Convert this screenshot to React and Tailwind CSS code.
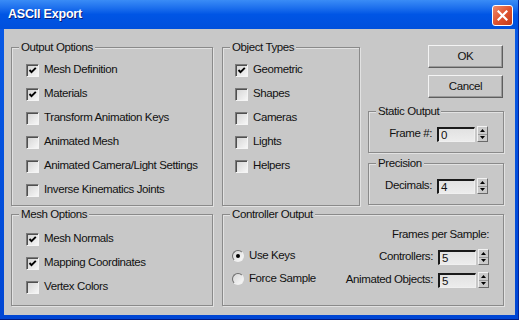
import React from 'react';

const CheckBox = ({ checked }) => (
  <div className="w-[13px] h-[13px] shrink-0 border border-t-[#7a7a7a] border-l-[#7a7a7a] border-b-[#f4f4f4] border-r-[#f4f4f4] bg-gradient-to-br from-[#d4d4d4] to-[#f6f6f6] shadow-[inset_1px_1px_0_#505050]">
    {checked && (
      <svg width="11" height="11" viewBox="0 0 11 11" className="block">
        <polyline points="2.5,5 4.5,7.2 8.8,2.8" fill="none" stroke="#000" strokeWidth="1.9" />
      </svg>
    )}
  </div>
);

const Check = ({ label, checked }) => (
  <div className="flex items-center h-[24px] gap-[5px]">
    <CheckBox checked={checked} />
    <span>{label}</span>
  </div>
);

const Radio = ({ label, checked }) => (
  <div className="flex items-center h-[16px] gap-[5px]">
    <div className="w-[12px] h-[12px] rounded-full border border-t-[#6e6e6e] border-l-[#6e6e6e] border-b-[#f0f0f0] border-r-[#f0f0f0] bg-gradient-to-br from-[#d6d6d6] to-[#fafafa] flex items-center justify-center">
      {checked && <div className="w-[4px] h-[4px] rounded-full bg-black" />}
    </div>
    <span>{label}</span>
  </div>
);

const Group = ({ title, className, children }) => (
  <div className={`relative border border-[#8a8a8a] shadow-[inset_1px_1px_0_#e2e2e2,1px_1px_0_#e2e2e2] ${className}`}>
    <span className="absolute -top-[8px] left-[7px] px-[2px] bg-[#c8c8c8] leading-[14px]">{title}</span>
    {children}
  </div>
);

const Spinner = ({ label, value }) => (
  <div className="flex items-center justify-end h-[16px]">
    <span className="mr-[5px]">{label}</span>
    <div className="w-[38px] h-[15px] border-t-2 border-l-2 border-t-[#1a1a1a] border-l-[#1a1a1a] border-b border-r border-b-[#f0f0f0] border-r-[#f0f0f0] bg-gradient-to-b from-[#e2e2e2] to-[#ececec] pl-[2px] leading-[12px]">
      {value}
    </div>
    <div className="ml-[2px] w-[11px] h-[16px] flex flex-col border border-t-[#f2f2f2] border-l-[#f2f2f2] border-b-[#6a6a6a] border-r-[#6a6a6a] bg-[#cacaca]">
      <div className="flex-1 flex items-center justify-center border-b border-[#9a9a9a]">
        <svg width="5" height="3" viewBox="0 0 5 3"><polygon points="2.5,0 5,3 0,3" fill="#000" /></svg>
      </div>
      <div className="flex-1 flex items-center justify-center">
        <svg width="5" height="3" viewBox="0 0 5 3"><polygon points="0,0 5,0 2.5,3" fill="#000" /></svg>
      </div>
    </div>
  </div>
);

const Button = ({ children, className }) => (
  <div className={`w-[75px] h-[23px] ml-[60px] flex items-center justify-center border border-t-[#f4f4f4] border-l-[#f4f4f4] border-b-[#5e5e5e] border-r-[#5e5e5e] shadow-[inset_-1px_-1px_0_#9a9a9a] ${className}`}>
    {children}
  </div>
);

export default function App() {
  return (
    <div className="w-[519px] h-[320px] flex flex-col bg-gradient-to-b from-[#0a5be6] to-[#0046d4] border-r border-r-[#00249a] border-b border-b-[#001a80] font-['Liberation_Sans',Arial,sans-serif] text-[11.5px] tracking-[-0.4px] text-[#111]">
      {/* title bar */}
      <div className="h-[29px] shrink-0 flex items-center justify-between pl-[8px] bg-gradient-to-b from-[#3a8cf6] via-[#0055e5] to-[#0050dc]">
        <span className="text-white font-bold text-[12.5px] tracking-[-0.2px] [text-shadow:1px_1px_0_#0a1e7a]">ASCII Export</span>
        <div className="mr-[5px] mt-[1px] w-[21px] h-[21px] rounded-[3px] border border-white bg-gradient-to-br from-[#ee8a6a] via-[#e0532f] to-[#c23a18] flex items-center justify-center">
          <svg width="11" height="11" viewBox="0 0 11 11">
            <path d="M1.5 1.5 L9.5 9.5 M9.5 1.5 L1.5 9.5" stroke="#fff" strokeWidth="2.2" strokeLinecap="square" />
          </svg>
        </div>
      </div>

      {/* dialog body */}
      <div className="flex-1 ml-[4px] mr-[3px] mb-[4px] bg-[#c8c8c8] pl-[7px] pt-[16px]">
        <div className="flex items-start">
          <Group title="Output Options" className="mt-[2px] w-[202px] h-[159px] pl-[14px] pt-[10px]">
            <Check label="Mesh Definition" checked />
            <Check label="Materials" checked />
            <Check label="Transform Animation Keys" />
            <Check label="Animated Mesh" />
            <Check label="Animated Camera/Light Settings" />
            <Check label="Inverse Kinematics Joints" />
          </Group>

          <Group title="Object Types" className="mt-[2px] ml-[9px] w-[138px] h-[159px] pl-[12px] pt-[10px]">
            <Check label="Geometric" checked />
            <Check label="Shapes" />
            <Check label="Cameras" />
            <Check label="Lights" />
            <Check label="Helpers" />
          </Group>

          <div className="ml-[8px] w-[136px] flex flex-col">
            <Button>OK</Button>
            <Button className="mt-[7px]">Cancel</Button>
            <Group title="Static Output" className="mt-[13px] h-[42px] pt-[14px] pr-[15px]">
              <Spinner label="Frame #:" value="0" />
            </Group>
            <Group title="Precision" className="mt-[10px] h-[42px] pt-[14px] pr-[15px]">
              <Spinner label="Decimals:" value="4" />
            </Group>
          </div>
        </div>

        <div className="flex items-start mt-[8px]">
          <Group title="Mesh Options" className="w-[202px] h-[92px] pl-[14px] pt-[12px]">
            <Check label="Mesh Normals" checked />
            <Check label="Mapping Coordinates" checked />
            <Check label="Vertex Colors" />
          </Group>

          <Group title="Controller Output" className="ml-[9px] w-[282px] h-[92px] flex justify-between pl-[9px] pr-[14px]">
            <div className="pt-[33px] flex flex-col gap-[7px]">
              <Radio label="Use Keys" checked />
              <Radio label="Force Sample" />
            </div>
            <div className="pt-[12px] flex flex-col">
              <div className="h-[14px] leading-[14px] text-right">Frames per Sample:</div>
              <div className="mt-[8px]">
                <Spinner label="Controllers:" value="5" />
              </div>
              <div className="mt-[7px]">
                <Spinner label="Animated Objects:" value="5" />
              </div>
            </div>
          </Group>
        </div>
      </div>
    </div>
  );
}
